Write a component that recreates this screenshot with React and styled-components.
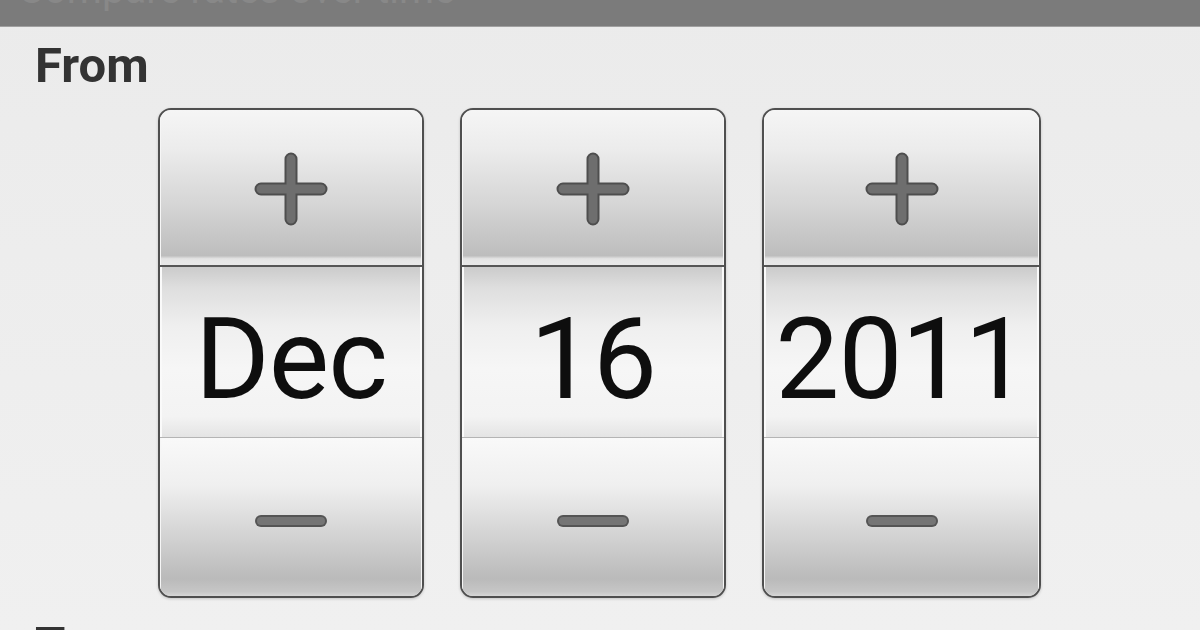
import React from 'react';
import styled, { createGlobalStyle } from 'styled-components';

const GlobalStyle = createGlobalStyle`
  html, body {
    margin: 0;
    padding: 0;
    background: #eeeeee;
    font-family: Roboto, "Noto Sans", "Liberation Sans", sans-serif;
    overflow: hidden;
  }
`;

const Screen = styled.div`
  width: 1200px;
  height: 630px;
  overflow: hidden;
  background: linear-gradient(#ebebeb, #f0f0f0);
`;

// dialog title bar, mostly scrolled off the top
const TitleBar = styled.div`
  height: 26px;
  background: #7b7b7b;
  border-bottom: 1px solid #a0a0a0;
  overflow: hidden;
  padding-left: 18px;
`;

const TitleText = styled.div`
  margin-top: -32px;
  font-size: 40px;
  line-height: 44px;
  color: #888888;
  white-space: nowrap;
`;

const Content = styled.div`
  padding-left: 35px;
`;

const Label = styled.div`
  margin-top: ${p => p.$top}px;
  font-size: 49px;
  font-weight: 700;
  line-height: 56px;
  color: #333333;
`;

const PickerRow = styled.div`
  display: grid;
  grid-template-columns: 266px 266px 279px;
  column-gap: 36px;
  margin-top: 14px;
  margin-left: 123px;
`;

const Spinner = styled.div`
  display: flex;
  flex-direction: column;
  height: 490px;
  box-sizing: border-box;
  border: 2px solid #4f4f4f;
  border-radius: 13px;
  overflow: hidden;
  box-shadow: 0 1px 3px rgba(0, 0, 0, 0.18);
`;

const StepButton = styled.div`
  display: flex;
  align-items: center;
  justify-content: center;
  flex: none;
  height: ${p => (p.$kind === 'plus' ? 155 : 160)}px;
  box-shadow: inset 1px 0 0 #f6f6f6, inset -1px 0 0 #f6f6f6;
  background: ${p =>
    p.$kind === 'plus'
      ? 'linear-gradient(#f5f5f5 0%, #ececec 25%, #d6d6d6 60%, #bdbdbd 94%, #e4e4e4 96%, #e8e8e8 100%)'
      : 'linear-gradient(#f9f9f9 0%, #efefef 30%, #d2d2d2 62%, #bababa 88%, #c6c6c6 96%, #dedede 100%)'};
  padding-top: ${p => (p.$kind === 'plus' ? 3 : 6)}px;
  box-sizing: border-box;
`;

const ValueCell = styled.div`
  display: flex;
  align-items: center;
  justify-content: center;
  flex: none;
  height: 173px;
  box-sizing: border-box;
  border-top: 2px solid #555555;
  border-bottom: 1px solid #b4b4b4;
  padding-top: 14px;
  background: linear-gradient(#cbcbcb 0%, #dedede 12%, #efefef 35%, #f6f6f6 60%, #f3f3f3 88%, #e4e4e4 100%);
  box-shadow: inset 2px 0 0 #fafafa, inset -2px 0 0 #fafafa;
  font-size: 114px;
  line-height: 114px;
  color: #0e0e0e;
  letter-spacing: -1px;
`;

const PlusIcon = () => (
  <svg width="74" height="74" viewBox="0 0 74 74">
    <g strokeLinecap="round" fill="none">
      <path d="M37 7 V67 M7 37 H67" stroke="#4e4e4e" strokeWidth="13" />
      <path d="M37 7 V67 M7 37 H67" stroke="#6e6e6e" strokeWidth="9" />
    </g>
  </svg>
);

const MinusIcon = () => (
  <svg width="74" height="16" viewBox="0 0 74 16">
    <g strokeLinecap="round" fill="none">
      <path d="M7 8 H67" stroke="#555555" strokeWidth="12" />
      <path d="M7 8 H67" stroke="#757575" strokeWidth="8" />
    </g>
  </svg>
);

const fields = ['Dec', '16', '2011'];

export default function App() {
  return (
    <Screen>
      <GlobalStyle />
      <TitleBar>
        <TitleText>Compare rates over time</TitleText>
      </TitleBar>
      <Content>
        <Label $top={11}>From</Label>
        <PickerRow>
          {fields.map(v => (
            <Spinner key={v}>
              <StepButton $kind="plus">
                <PlusIcon />
              </StepButton>
              <ValueCell>{v}</ValueCell>
              <StepButton $kind="minus">
                <MinusIcon />
              </StepButton>
            </Spinner>
          ))}
        </PickerRow>
        <Label $top={19}>To</Label>
      </Content>
    </Screen>
  );
}
